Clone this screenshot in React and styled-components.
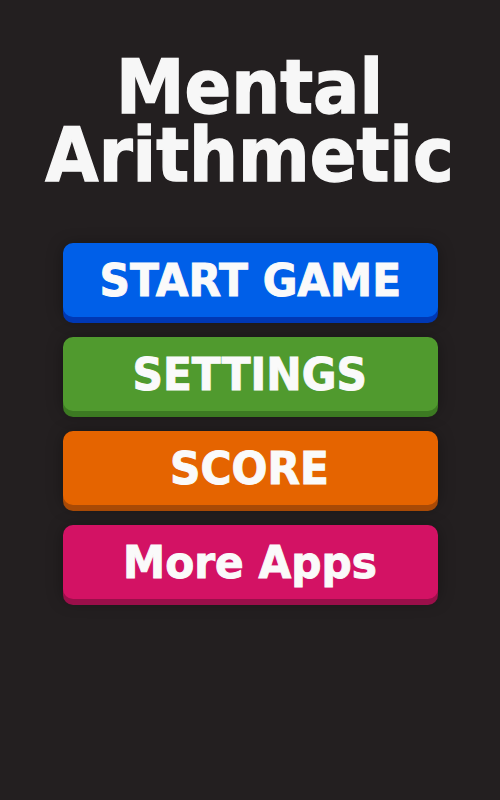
import React from "react";
import styled, { createGlobalStyle } from "styled-components";

const Global = createGlobalStyle`
  html, body { margin: 0; padding: 0; background: #231f20; }
  body { font-family: "DejaVu Sans", "Liberation Sans", sans-serif; }
`;

const Screen = styled.div`
  width: 500px;
  height: 800px;
  background: #231f20;
  display: flex;
  flex-direction: column;
  align-items: center;
  padding-top: 53px;
  box-sizing: border-box;
`;

const Title = styled.h1`
  margin: 0;
  font-family: "DejaVu Sans", sans-serif;
  font-weight: 700;
  font-size: 74px;
  line-height: 68px;
  color: #f7f7f7;
  -webkit-text-stroke: 1.4px #f7f7f7;
  text-align: center;
  transform: scaleX(0.93);
  white-space: nowrap;
`;

const Menu = styled.div`
  margin-top: 54px;
  display: flex;
  flex-direction: column;
  gap: 14px;
  width: 375px;
`;

const Button = styled.button`
  height: 74px;
  width: 100%;
  border: none;
  border-radius: 10px;
  background: ${(p) => p.$bg};
  box-shadow: 0 6px 0 ${(p) => p.$edge}, 0 2px 16px rgba(0, 0, 0, 0.35);
  display: flex;
  align-items: center;
  justify-content: center;
  padding: 0;
  margin-bottom: 6px;
  cursor: pointer;
`;

const Label = styled.span`
  font-family: "DejaVu Sans", sans-serif;
  font-weight: 700;
  font-size: 45px;
  line-height: 1;
  color: #fafafa;
  -webkit-text-stroke: 1px #fafafa;
  transform: scaleX(0.94);
  white-space: nowrap;
`;

const items = [
  { label: "START GAME", bg: "#005fe8", edge: "#0038b4" },
  { label: "SETTINGS", bg: "#509a2e", edge: "#3c7a22" },
  { label: "SCORE", bg: "#e56400", edge: "#a84a06" },
  { label: "More Apps", bg: "#d31264", edge: "#9a0f4a" },
];

export default function App() {
  return (
    <>
      <Global />
      <Screen>
        <Title>
          Mental
          <br />
          Arithmetic
        </Title>
        <Menu>
          {items.map((it) => (
            <Button key={it.label} $bg={it.bg} $edge={it.edge}>
              <Label>{it.label}</Label>
            </Button>
          ))}
        </Menu>
      </Screen>
    </>
  );
}
